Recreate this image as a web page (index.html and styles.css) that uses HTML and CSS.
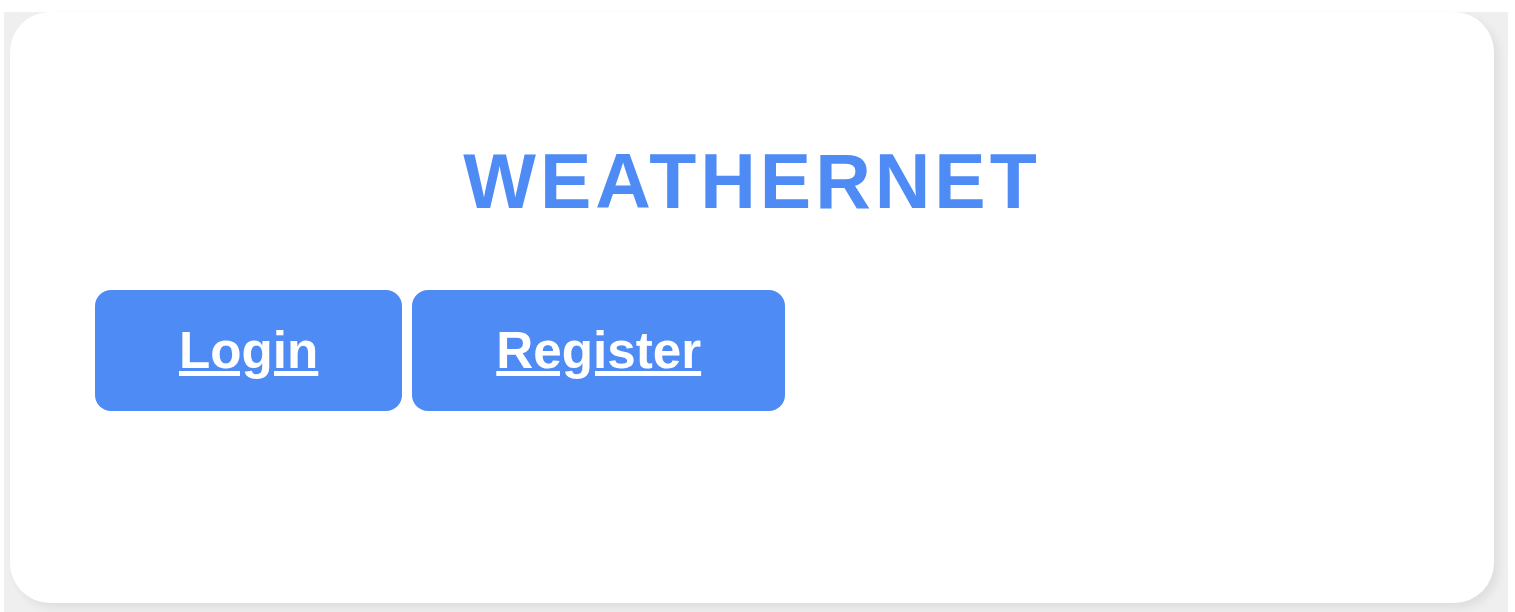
FILE: index.html
```html
<!DOCTYPE html>
<html lang="en">
<head>
  <meta charset="UTF-8" />
  <meta name="viewport" content="width=device-width, initial-scale=1.0"/>
  <title>WeatherNet</title>
  <link rel="stylesheet" href="styles.css">
</head>
<body>

<div class="page">
  <div class="card">
    <h1 class="brand">WEATHERNET</h1>
    <div class="actions">
      <a href="#" class="btn">Login</a>
      <a href="#" class="btn">Register</a>
    </div>
  </div>
</div>

</body>
</html>
```

FILE: styles.css
```css
body {
  font-family: 'Liberation Sans', Arial, sans-serif;
  background: white;
  margin: 0;
}

.page {
  margin: 12px 7px 0 4px;
  background: #efefef;
  padding: 0 14px 9px 6px;
}

.card {
  background: white;
  height: 591px;
  box-sizing: border-box;
  padding: 125px 85px;
  border-radius: 40px;
  box-shadow: 5px 5px 10px rgba(0,0,0,0.07);
}

.brand {
  margin: 0 0 64px;
  text-align: center;
  font-size: 77px;
  font-weight: bold;
  letter-spacing: 4px;
  color: #4f8bf5;
}

.actions {
  display: flex;
  gap: 10px;
}

.btn {
  display: block;
  background-color: #4f8bf5;
  color: white;
  font-size: 3.2rem;
  font-weight: bold;
  padding: 31px 84px;
  border-radius: 16px;
}
```
